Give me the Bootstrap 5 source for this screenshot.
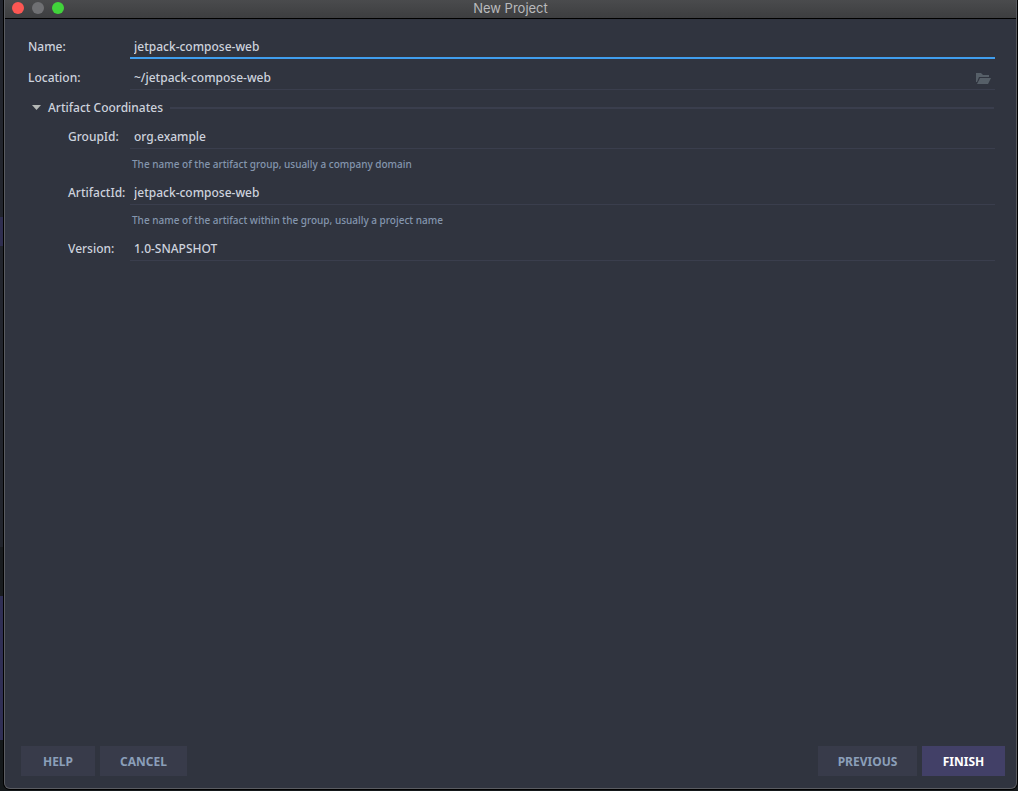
<!DOCTYPE html>
<html lang="en">
<head>
<meta charset="utf-8">
<meta name="viewport" content="width=device-width, initial-scale=1">
<title>New Project</title>
<link href="https://cdn.jsdelivr.net/npm/bootstrap@5.3.0/dist/css/bootstrap.min.css" rel="stylesheet">
<style>
  body {
    background: linear-gradient(#22252d 0 217px, #2f2e50 217px 246px, #22252d 246px 547px, #191c1f 547px 596px, #302f55 596px 740px, #15191b 740px);
    font-family: "Noto Sans", sans-serif;
    font-size: 12px;
    font-weight: 500;
    line-height: 16px;
    color: #cdd2dd;
    padding: 0 1px 2px 4px;
  }
  .dialog {
    background: #30343f;
    border: 1px solid #5a5c61;
    border-top: 0;
    border-radius: 0 0 6px 6px;
    box-shadow: 0 0 0 1px #000;
  }
  .titlebar {
    height: 19px;
    background: linear-gradient(#4a4b4d, #3d3e40);
    border-bottom: 1px solid #000;
    padding: 0 7px;
  }
  .titlebar h1 { font: 13px/17px Inter, sans-serif; color: #b9babc; }
  .lights { width: 60px; height: 16px; gap: 8px; }
  .light { width: 12px; height: 12px; border: 0; padding: 0; border-radius: 50%; }
  .light-close { background: #fc5753; }
  .light-min { background: #6f7073; }
  .light-max { background: #41d33b; }
  .form-area { padding: 18px 21px 0 23px; }
  .field-label { width: 102px; height: 20px; line-height: 20px; }
  .nested { padding-left: 40px; }
  .nested .field-label { width: 62px; }
  .field-box { border-bottom: 1px solid #3a3e4d; }
  .field-box.active { border-bottom: 2px solid #409eee; }
  .field-box input {
    background: none; border: 0; outline: 0; color: inherit; font-weight: 500;
    height: 21px; padding: 0 4px 2px; min-width: 0;
  }
  .field-box.active input { height: 20px; }
  .browse { border: 0; background: none; padding: 0 4px; line-height: 0; color: #565f68; }
  .location-row { margin-top: 9px; }
  .section { height: 37px; padding: 0 1px 2px 4px; }
  .section button { border: 0; background: none; color: inherit; font-weight: 500; padding: 0; gap: 7px; }
  .section hr { border: 0; height: 2px; background: #3a3e4d; opacity: 1; margin: 0 0 0 7px; }
  .hint { font-size: 10px; color: #8496ae; margin: 7px 0 11px 64px; }
  .footer-bar { padding: 0 11px 12px 16px; gap: 5px; }
  .act {
    height: 30px; border: 0; border-radius: 0; padding: 2px 19px 0;
    background: #383b4a; color: #8b9fb9; font-size: 12px; font-weight: 700; line-height: 16px;
    min-width: 74px;
  }
  .act:hover { background: #404454; color: #a5b5ca; }
  .act-cancel { min-width: 87px; }
  .act-prev { min-width: 99px; }
  .act-main { min-width: 83px; }
  .act-main, .act-main:hover { background: #424067; color: #fff; }
</style>
</head>
<body class="vh-100">
<main class="dialog h-100 d-flex flex-column">
  <header class="titlebar d-flex justify-content-between">
    <div class="lights d-flex align-items-center">
      <button class="light light-close" aria-label="Close"></button>
      <button class="light light-min" aria-label="Minimize"></button>
      <button class="light light-max" aria-label="Zoom"></button>
    </div>
    <h1 class="m-0">New Project</h1>
    <div class="lights"></div>
  </header>

  <form class="form-area flex-grow-1">
    <div class="d-flex">
      <label class="field-label" for="name">Name:</label>
      <div class="field-box active flex-grow-1 d-flex"><input class="w-100" id="name" value="jetpack-compose-web"></div>
    </div>
    <div class="d-flex location-row">
      <label class="field-label" for="location">Location:</label>
      <div class="field-box flex-grow-1 d-flex">
        <input class="flex-grow-1" id="location" value="~/jetpack-compose-web">
        <button type="button" class="browse" aria-label="Browse">
          <svg width="15" height="12" viewBox="0 0 15 12" fill="currentColor"><path d="M0 0h5l2 2h6v2H3L1 9H0zM4 5h11l-3 6H1z"/></svg>
        </button>
      </div>
    </div>

    <div class="section d-flex align-items-center">
      <button type="button" class="d-flex align-items-center">
        <svg width="9" height="6" viewBox="0 0 9 6"><path d="M0 0h9L4.500 5z" fill="#b4b7b5"/></svg>
        Artifact Coordinates
      </button>
      <hr class="flex-grow-1">
    </div>

    <div class="nested">
      <div class="d-flex">
        <label class="field-label" for="group">GroupId:</label>
        <div class="field-box flex-grow-1 d-flex"><input class="w-100" id="group" value="org.example"></div>
      </div>
      <p class="hint">The name of the artifact group, usually a company domain</p>
      <div class="d-flex">
        <label class="field-label" for="artifact">ArtifactId:</label>
        <div class="field-box flex-grow-1 d-flex"><input class="w-100" id="artifact" value="jetpack-compose-web"></div>
      </div>
      <p class="hint">The name of the artifact within the group, usually a project name</p>
      <div class="d-flex">
        <label class="field-label" for="version">Version:</label>
        <div class="field-box flex-grow-1 d-flex"><input class="w-100" id="version" value="1.0-SNAPSHOT"></div>
      </div>
    </div>
  </form>

  <footer class="footer-bar d-flex">
    <button type="button" class="btn act">HELP</button>
    <button type="button" class="btn act act-cancel">CANCEL</button>
    <button type="button" class="btn act act-prev ms-auto">PREVIOUS</button>
    <button type="button" class="btn act act-main">FINISH</button>
  </footer>
</main>
<script src="https://cdn.jsdelivr.net/npm/bootstrap@5.3.0/dist/js/bootstrap.bundle.min.js"></script>
</body>
</html>
